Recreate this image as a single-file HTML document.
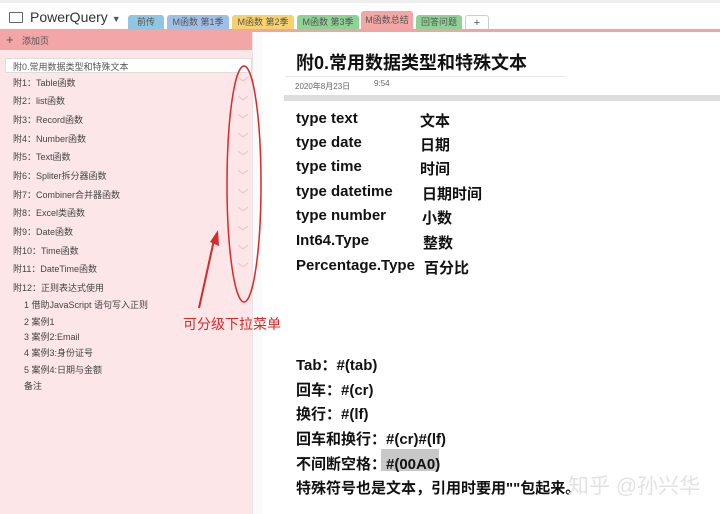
<!DOCTYPE html>
<html><head><meta charset="utf-8"><style>
*{margin:0;padding:0;box-sizing:border-box}
body{width:720px;height:514px;overflow:hidden;background:#fff;font-family:"Liberation Sans","Noto Sans CJK SC",sans-serif;position:relative}
.a{position:absolute;white-space:nowrap}
.tab{position:absolute;top:15px;height:14px;font-size:9px;color:#555;text-align:center;line-height:14px;border-radius:3px 3px 0 0}
.side{font-size:9px;color:#444}
.b{font-size:15px;font-weight:bold;color:#111;margin-top:2px}
</style></head><body>
<div class="a" style="left:0;top:0;width:720px;height:3px;background:#eee"></div>
<div class="a" style="left:9px;top:12px;width:14px;height:11px;border:1px solid #666;border-radius:1px"></div>
<div class="a" style="left:30px;top:9px;font-size:14px;color:#333">PowerQuery <span style="font-size:9px;color:#555">▼</span></div>
<div class="tab" style="left:128px;width:36px;background:#8fc6e4">前传</div>
<div class="tab" style="left:167px;width:62px;background:#9ec0e8">M函数 第1季</div>
<div class="tab" style="left:232px;width:62px;background:#f7d26c">M函数 第2季</div>
<div class="tab" style="left:297px;width:62px;background:#8fd394">M函数 第3季</div>
<div class="tab" style="left:361px;width:52px;top:11px;height:18px;line-height:18px;background:#f3a6a6">M函数总结</div>
<div class="tab" style="left:416px;width:46px;background:#8fd394">回答问题</div>
<div class="tab" style="left:465px;width:24px;background:#fff;border:1px solid #ccc;border-bottom:none;font-size:11px">+</div>
<div class="a" style="left:0;top:29px;width:720px;height:3px;background:#eea5a5"></div>
<div class="a" style="left:0;top:32px;width:252px;height:482px;background:#fde6e7"></div>
<div class="a" style="left:0;top:30px;width:252px;height:20px;background:#f3a6a6"></div>
<div class="a" style="left:6px;top:32px;font-size:13px;color:#555">+</div>
<div class="a side" style="left:22px;top:34px;color:#555">添加页</div>
<div class="a" style="left:252px;top:32px;width:10px;height:482px;background:#fafafa;border-left:1px solid #e5e5e5"></div>
<div class="a" style="left:5px;top:58px;width:247px;height:15px;background:#fff;border:1px solid #ddd"></div>
<div class="a side" style="left:13px;top:60px;color:#555">附0.常用数据类型和特殊文本</div>
<div class="a side" style="left:13px;top:76px">附1：Table函数</div>
<div class="a side" style="left:13px;top:94px">附2：list函数</div>
<div class="a side" style="left:13px;top:113px">附3：Record函数</div>
<div class="a side" style="left:13px;top:132px">附4：Number函数</div>
<div class="a side" style="left:13px;top:150px">附5：Text函数</div>
<div class="a side" style="left:13px;top:169px">附6：Spliter拆分器函数</div>
<div class="a side" style="left:13px;top:188px">附7：Combiner合并器函数</div>
<div class="a side" style="left:13px;top:206px">附8：Excel类函数</div>
<div class="a side" style="left:13px;top:225px">附9：Date函数</div>
<div class="a side" style="left:13px;top:244px">附10：Time函数</div>
<div class="a side" style="left:13px;top:262px">附11：DateTime函数</div>
<div class="a side" style="left:13px;top:281px">附12：正则表达式使用</div>
<div class="a side" style="left:24px;top:298px">1 借助JavaScript 语句写入正则</div>
<div class="a side" style="left:24px;top:315px">2 案例1</div>
<div class="a side" style="left:24px;top:330px">3 案例2:Email</div>
<div class="a side" style="left:24px;top:346px">4 案例3:身份证号</div>
<div class="a side" style="left:24px;top:363px">5 案例4:日期与金额</div>
<div class="a side" style="left:24px;top:379px">备注</div>
<svg class="a" style="left:0;top:0" width="720" height="514">
<g stroke="#e6c4c6" stroke-width="1" fill="none">
<path d="M238 77l5 4 5-4M238 96l5 4 5-4M238 114l5 4 5-4M238 133l5 4 5-4M238 151l5 4 5-4M238 170l5 4 5-4M238 189l5 4 5-4M238 207l5 4 5-4M238 226l5 4 5-4M238 245l5 4 5-4M238 263l5 4 5-4"/>
</g>
<ellipse cx="244" cy="184" rx="17" ry="118" fill="none" stroke="#d42b2b" stroke-width="1.5"/>
<path d="M199 308L214 240" stroke="#d42b2b" stroke-width="2"/>
<path d="M210 242L218 230L219 246Z" fill="#d42b2b"/>
<rect x="284" y="95" width="436" height="6" fill="#ddd"/>
</svg>
<div class="a" style="left:183px;top:314px;font-size:14px;color:#d42b2b">可分级下拉菜单</div>
<div class="a" style="left:296px;top:49px;font-size:18px;font-weight:bold;color:#111">附0.常用数据类型和特殊文本</div>
<div class="a" style="left:286px;top:76px;width:280px;height:1px;background:#e8e8e8"></div>
<div class="a" style="left:295px;top:81px;font-size:8px;color:#666">2020年8月23日</div>
<div class="a" style="left:374px;top:79px;font-size:8px;color:#666">9:54</div>
<div class="a b" style="left:296px;top:108px">type text</div><div class="a b" style="left:420px;top:108px">文本</div>
<div class="a b" style="left:296px;top:132px">type date</div><div class="a b" style="left:420px;top:132px">日期</div>
<div class="a b" style="left:296px;top:156px">type time</div><div class="a b" style="left:420px;top:156px">时间</div>
<div class="a b" style="left:296px;top:181px">type datetime</div><div class="a b" style="left:422px;top:181px">日期时间</div>
<div class="a b" style="left:296px;top:205px">type number</div><div class="a b" style="left:422px;top:205px">小数</div>
<div class="a b" style="left:296px;top:230px">Int64.Type</div><div class="a b" style="left:423px;top:230px">整数</div>
<div class="a b" style="left:296px;top:255px">Percentage.Type</div><div class="a b" style="left:424px;top:255px">百分比</div>
<div class="a b" style="left:296px;top:352px">Tab：#(tab)</div>
<div class="a b" style="left:296px;top:377px">回车：#(cr)</div>
<div class="a b" style="left:296px;top:401px">换行：#(lf)</div>
<div class="a b" style="left:296px;top:426px">回车和换行：#(cr)#(lf)</div>
<div class="a" style="left:381px;top:449px;width:58px;height:22px;background:#c8c8c8"></div>
<div class="a b" style="left:296px;top:451px">不间断空格：#(00A0)</div>
<div class="a b" style="left:296px;top:475px">特殊符号也是文本，引用时要用""包起来。</div>
<div class="a" style="left:568px;top:470px;font-size:21px;color:#e2e2e2">知乎 @孙兴华</div>
</body></html>
